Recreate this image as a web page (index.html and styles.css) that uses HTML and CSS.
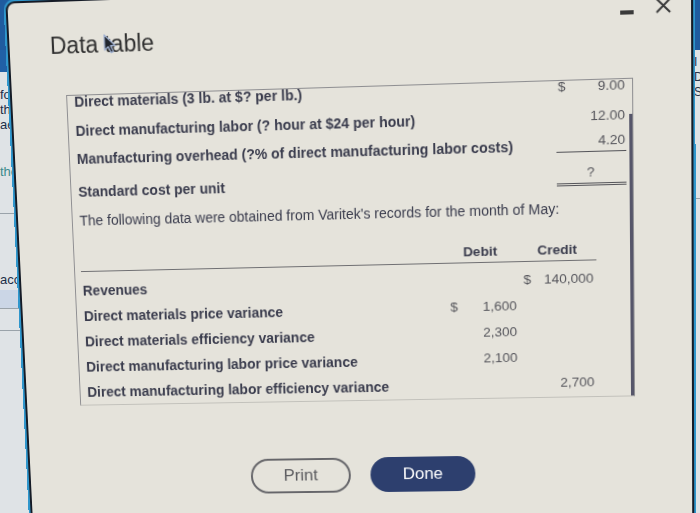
FILE: index.html
```html
<!DOCTYPE html>
<html lang="en">
<head>
<meta charset="utf-8">
<title>Data table</title>
<link rel="stylesheet" href="styles.css">
</head>
<body>
<div class="page">
  <div class="page-head"></div>
  <div class="page-main">
    <div class="page-left">
      <div class="left-blue"></div>
      <p class="frag">for</p>
      <p class="frag">that</p>
      <p class="frag">acc</p>
      <p class="frag teal gap1">the</p>
      <hr class="frag-line gap2">
      <p class="frag gap3">acc</p>
      <div class="frag-cell"></div>
      <hr class="frag-line">
      <hr class="frag-line gap4">
    </div>
    <div class="page-right">
      <p class="frag-r">I</p>
      <p class="frag-r">D</p>
      <p class="frag-r">S</p>
      <hr class="frag-line gap5">
    </div>
  </div>
</div>

<div class="dialog">
  <div class="header">
    <h1 class="title">Data table<svg class="cursor" width="13" height="20" viewBox="0 0 13 20"><path d="M1 1 L1 16 L4.6 12.6 L7.2 18.6 L9.6 17.6 L7 11.7 L11.8 11.7 Z" fill="#22262e" stroke="#9fb0d0" stroke-width="1.2" stroke-linejoin="round"/></svg></h1>
    <div class="controls">
      <span class="minimize"></span>
      <svg class="close" width="15" height="15" viewBox="0 0 15 15"><path d="M1 1 L14 14 M14 1 L1 14" stroke="#3a3a3a" stroke-width="1.8" fill="none"/></svg>
    </div>
  </div>

  <div class="box">
    <div class="box-content">
      <div class="scrolled">
        <div class="row">
          <span class="lbl">Direct materials (3 lb. at $? per lb.)</span>
          <span class="amt"><span>$</span><span>9.00</span></span>
        </div>
        <div class="row">
          <span class="lbl">Direct manufacturing labor (? hour at $24 per hour)</span>
          <span class="amt end"><span>12.00</span></span>
        </div>
        <div class="row">
          <span class="lbl">Manufacturing overhead (?% of direct manufacturing labor costs)</span>
          <span class="amt end single"><span>4.20</span></span>
        </div>
        <div class="row total">
          <span class="lbl">Standard cost per unit</span>
          <span class="amt end double"><span class="q">?</span></span>
        </div>
        <p class="note">The following data were obtained from Varitek's records for the month of May:</p>
        <div class="ledger">
          <div class="lrow head">
            <span class="llbl"></span>
            <span class="col debit hd">Debit</span>
            <span class="col credit hd">Credit</span>
          </div>
          <div class="lrow">
            <span class="llbl">Revenues</span>
            <span class="col debit"></span>
            <span class="col credit"><span>$</span><span>140,000</span></span>
          </div>
          <div class="lrow">
            <span class="llbl">Direct materials price variance</span>
            <span class="col debit"><span>$</span><span>1,600</span></span>
            <span class="col credit"></span>
          </div>
          <div class="lrow">
            <span class="llbl">Direct materials efficiency variance</span>
            <span class="col debit end"><span>2,300</span></span>
            <span class="col credit"></span>
          </div>
          <div class="lrow">
            <span class="llbl">Direct manufacturing labor price variance</span>
            <span class="col debit end"><span>2,100</span></span>
            <span class="col credit"></span>
          </div>
          <div class="lrow">
            <span class="llbl">Direct manufacturing labor efficiency variance</span>
            <span class="col debit"></span>
            <span class="col credit end"><span>2,700</span></span>
          </div>
        </div>
      </div>
    </div>
    <div class="track"><div class="thumb"></div></div>
  </div>

  <div class="actions">
    <button class="btn print">Print</button>
    <button class="btn done">Done</button>
  </div>
</div>
</body>
</html>
```

FILE: styles.css
```css
* { box-sizing: border-box; }

html, body {
  margin: 0;
  padding: 0;
}

body {
  width: 700px;
  height: 513px;
  overflow: hidden;
  position: relative;
  background: #dfe3e6;
  font-family: "Liberation Sans", Arial, sans-serif;
}

/* underlying page */
.page {
  width: 700px;
  height: 513px;
}

.page-head {
  height: 50px;
  background: #1f5b9f;
}

.page-main {
  display: flex;
  justify-content: space-between;
}

.page-left {
  width: 44px;
  overflow: hidden;
}

.left-blue {
  height: 22px;
  background: #2060a6;
  margin-bottom: 15px;
}

.frag {
  margin: 0;
  font-size: 13px;
  line-height: 15px;
  color: #1d2e48;
  text-align: right;
  padding-right: 33px;
  white-space: nowrap;
}

.frag.teal { color: #3d8a8c; }
.frag.gap1 { margin-top: 32px; }
.frag.gap3 { margin-top: 58px; }

.frag-line {
  margin: 0;
  border: 0;
  height: 1px;
  background: #9aa3aa;
}

.frag-line.gap2 { margin-top: 34px; }
.frag-line.gap4 { margin-top: 21px; }
.frag-line.gap5 { margin-top: 98px; }

.frag-cell {
  height: 18px;
  margin-top: 3px;
  background: #cbd6e6;
}

.page-right {
  width: 8px;
  overflow: hidden;
  padding-top: 5px;
}

.frag-r {
  margin: 0;
  padding-left: 2px;
  font-size: 12px;
  line-height: 15px;
  color: #2a3446;
}

/* dialog window */
.dialog {
  position: absolute;
  left: 13px;
  top: -6px;
  width: 676px;
  height: 546px;
  background: #e5e3db;
  border: 2px solid #151b26;
  border-radius: 9px;
  box-shadow: 0 0 0 2px #2f96cc;
  transform: perspective(1000px) rotate(-1.5deg) rotateX(-4deg) rotateY(-2.5deg);
  transform-origin: 337px 262px;
}

.header {
  display: flex;
  justify-content: space-between;
  align-items: flex-start;
  padding: 0 19px 0 41px;
}

.title {
  position: relative;
  margin: 32px 0 0 0;
  font-size: 23px;
  line-height: 22px;
  font-weight: normal;
  color: #303030;
}

.cursor {
  position: absolute;
  left: 54px;
  top: 1px;
}

.controls {
  display: flex;
  align-items: flex-start;
  gap: 21px;
  margin-top: 16px;
}

.minimize {
  width: 13px;
  height: 4px;
  margin-top: 11px;
  background: #3a3a3a;
}

.close { display: block; }

.box {
  display: flex;
  margin: 38px 0 0 55px;
  width: 561px;
  height: 315px;
  border: 1px solid #8f8f92;
  border-bottom-color: #c2c1bb;
}

.box-content {
  flex: 1;
  overflow: hidden;
}

.track {
  width: 3px;
  padding-top: 34px;
}

.thumb {
  height: 100%;
  background: #56566a;
}

.scrolled {
  margin-top: -8px;
}

.row {
  display: flex;
  align-items: center;
  justify-content: space-between;
  height: 28.5px;
  padding: 0 3px 0 7px;
}

.row.total { height: 36.5px; }

.lbl, .llbl {
  font-size: 14px;
  font-weight: bold;
  color: #3a3c4d;
  white-space: nowrap;
}

.amt {
  display: flex;
  justify-content: space-between;
  width: 68px;
  line-height: 16px;
  font-size: 13.5px;
  color: #56565c;
  padding: 0 1px 0 2px;
}

.amt.end { justify-content: flex-end; }
.amt.single { border-bottom: 1px solid #55555a; padding-bottom: 2px; margin-bottom: 6px; }
.amt.double { border-bottom: 3px double #55555a; padding-bottom: 2px; margin-bottom: 6px; }
.amt .q { padding-right: 30px; }

.note {
  margin: 0 0 18px 0;
  height: 22px;
  line-height: 22px;
  padding-left: 7px;
  font-size: 14px;
  color: #3a3c4d;
  white-space: nowrap;
}

.ledger {
  width: 517px;
  margin-left: 6px;
}

.lrow {
  display: flex;
  align-items: center;
  height: 26px;
}

.lrow.head {
  height: 23px;
  border-bottom: 1px solid #6f6f72;
  margin-bottom: 4px;
}

.llbl {
  flex: 1;
  padding-left: 1px;
  padding-top: 3px;
}

.col {
  display: flex;
  justify-content: space-between;
  font-size: 13.5px;
  color: #56565c;
}

.col.debit { width: 75px; padding: 0 2px 0 7px; }
.col.credit { width: 77px; padding: 0 3px 0 5px; }
.col.end { justify-content: flex-end; }

.col.hd {
  justify-content: center;
  font-weight: bold;
  color: #3a3c4d;
  padding: 0;
}

.actions {
  display: flex;
  justify-content: center;
  gap: 20px;
  margin-top: 58px;
  padding-left: 12px;
}

.btn {
  height: 36px;
  border-radius: 18px;
  font-family: "Liberation Sans", Arial, sans-serif;
  font-size: 17px;
  padding: 0;
}

.btn.print {
  width: 102px;
  background: transparent;
  border: 2px solid #66666a;
  color: #5a5a5e;
}

.btn.done {
  width: 106px;
  background: #2d3f6e;
  border: 0;
  color: #ffffff;
}
```
